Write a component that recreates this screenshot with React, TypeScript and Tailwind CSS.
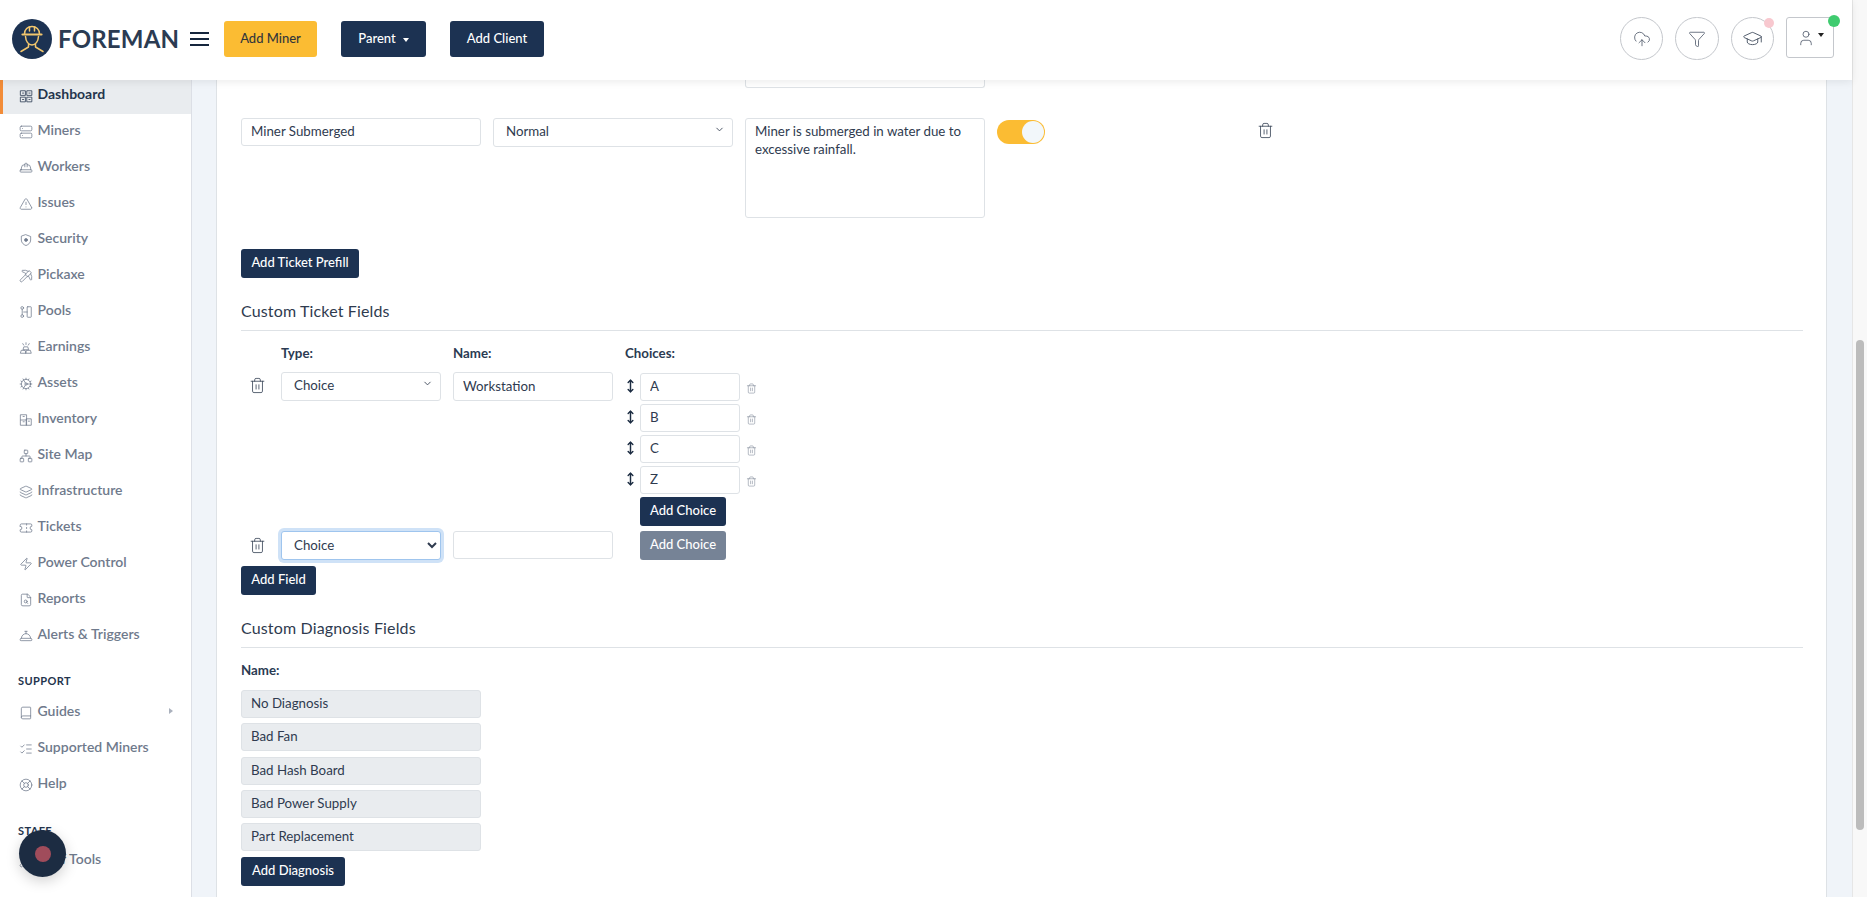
import React from "react";
import {
  CloudUpload, Funnel, GraduationCap, User, Trash2, Server, HardHat, TriangleAlert,
  Pickaxe, Cog, Network, Layers, Ticket, Zap, FileSearch, ConciergeBell,
  Book, ListChecks, LifeBuoy, Wrench, ChevronDown, MoveVertical,
} from "lucide-react";

const FONT = "font-['Lato','Liberation_Sans',sans-serif]";

type IconProps = { size?: number; strokeWidth?: number; className?: string };

const mk = (body: React.ReactNode) => ({ size = 14, strokeWidth = 1.3, className = "" }: IconProps) => (
  <svg width={size} height={size} viewBox="0 0 24 24" fill="none" stroke="currentColor" strokeWidth={strokeWidth} strokeLinecap="round" strokeLinejoin="round" className={className}>
    {body}
  </svg>
);

const DashIcon = mk(<>
  <rect x="3" y="3" width="8" height="8" /><rect x="14" y="3" width="8" height="8" />
  <rect x="3" y="14" width="8" height="8" /><rect x="14" y="14" width="8" height="8" />
  <path d="M6 7h2M17 7h2M6 18h2M17 18h2" />
</>);
const ShieldDot = mk(<>
  <path d="M12 3l8 3v6c0 5-4 8-8 9.500-4-1.500-8-4.500-8-9.500V6z" /><circle cx="12" cy="12" r="2.500" fill="currentColor" />
</>);
const PoolIcon = mk(<>
  <rect x="14" y="3" width="7" height="18" rx="1" /><path d="M14 12H8M5.500 7.500v9" />
  <circle cx="5.500" cy="5" r="2.300" /><circle cx="5.500" cy="19" r="2.300" />
</>);
const GoldIcon = mk(<>
  <path d="M9 10h6l1.500 5h-9zM4.500 16h6L12 21H3zM13.500 16h6L21 21h-9z" /><path d="M12 3v3M6.500 4.500L8 7M17.500 4.500L16 7" />
</>);
const InventoryIcon = mk(<>
  <rect x="3" y="3" width="10" height="18" /><rect x="13" y="10" width="8" height="11" />
  <path d="M3 12h10M7 6h2M7 15h2M16 14h2" />
</>);

const nav: [string, React.ComponentType<IconProps>][] = [
  ["Dashboard", DashIcon], ["Miners", Server], ["Workers", HardHat], ["Issues", TriangleAlert],
  ["Security", ShieldDot], ["Pickaxe", Pickaxe], ["Pools", PoolIcon], ["Earnings", GoldIcon],
  ["Assets", Cog], ["Inventory", InventoryIcon], ["Site Map", Network], ["Infrastructure", Layers],
  ["Tickets", Ticket], ["Power Control", Zap], ["Reports", FileSearch], ["Alerts & Triggers", ConciergeBell],
];
const support: [string, React.ComponentType<IconProps>][] = [
  ["Guides", Book], ["Supported Miners", ListChecks], ["Help", LifeBuoy],
];

function NavRow({ label, Icon, active, caret }: { label: string; Icon: React.ComponentType<IconProps>; active?: boolean; caret?: boolean }) {
  return (
    <div className={`flex h-9 shrink-0 items-center pb-[5px] pr-[18px] text-[14px] ${active ? "border-l-[3px] border-[#f28c38] bg-[#e9ecef] pl-[16px] font-bold text-[#24344d]" : "pl-[19px] font-semibold text-[#6f7a8c]"}`}>
      <Icon size={14} strokeWidth={1.3} className="mr-[4.5px] mt-[4px] shrink-0" />
      <span>{label}</span>
      {caret && <span className="ml-auto h-0 w-0 border-y-[3px] border-l-[4px] border-y-transparent border-l-[#aab1bd]" />}
    </div>
  );
}

function Btn({ children, className = "" }: { children: React.ReactNode; className?: string }) {
  return (
    <button className={`h-[29px] shrink-0 rounded-[3px] bg-[#1c3252] pb-[1px] text-[13px] font-medium text-white ${className}`}>{children}</button>
  );
}

function Field({ value = "", className = "", disabled }: { value?: string; className?: string; disabled?: boolean }) {
  return (
    <input
      defaultValue={value}
      disabled={disabled}
      className={`rounded-[3px] border border-[#dee2e6] pb-[2px] pl-[9px] pr-[9px] text-[13.3px] text-[#2f3b4f] outline-none ${disabled ? "bg-[#e9ecef]" : "bg-white"} ${className}`}
    />
  );
}

function Sel({ value, width }: { value: string; width: string }) {
  return (
    <div className={`relative h-[29px] shrink-0 rounded-[3px] border border-[#dee2e6] bg-white pl-3 text-[13.3px] leading-[25px] text-[#2f3b4f] ${width}`}>
      {value}
      <ChevronDown size={11} strokeWidth={2} className="absolute right-[7px] top-[5px] text-[#3f4a5c]" />
    </div>
  );
}

const Logo = () => (
  <svg width="40" height="40" viewBox="0 0 40 40" className="shrink-0">
    <circle cx="20" cy="20" r="20" fill="#1c3252" />
    <g fill="none" stroke="#f2c66d" strokeWidth="1.500" strokeLinecap="round" strokeLinejoin="round">
      <path d="M10.500 15.500h19" strokeWidth="2.200" />
      <path d="M12.500 15c0-4.500 3.200-7.500 7.500-7.500s7.500 3 7.500 7.500" />
      <path d="M17.500 8v4M22.500 8v4" />
      <path d="M13.500 17.500c.3 5 3 8.500 6.500 8.500s6.200-3.500 6.500-8.500" />
      <path d="M16.500 25.500v2.500L9 32.500M23.500 25.500v2.500l7.500 4.500" />
    </g>
  </svg>
);

function RoundIcon({ children, w }: { children: React.ReactNode; w: string }) {
  return <div className={`flex h-[43px] ${w} items-center justify-center rounded-full border border-[#c4c7cc] text-[#3f4a5c]`}>{children}</div>;
}

const Hamburger = () => (
  <div className="ml-[12px] flex h-[14px] w-[19px] shrink-0 flex-col justify-between">
    <span className="h-[2px] bg-[#16263d]" /><span className="h-[2px] bg-[#16263d]" /><span className="h-[2px] bg-[#16263d]" />
  </div>
);

export default function App() {
  return (
    <div className={`flex h-[897px] w-full overflow-hidden bg-[#f0f4f9] ${FONT}`}>
      <div className="flex min-w-0 flex-1 flex-col">
        <header className="relative z-10 flex h-20 shrink-0 items-center bg-white pb-[2px] pl-3 pr-[18px] shadow-[0_2px_8px_rgba(0,0,0,0.08)]">
          <Logo />
          <span className="ml-[6px] w-[120px] text-[24px] font-bold leading-none tracking-[0.2px] text-[#2b3b52]">FOREMAN</span>
          <Hamburger />
          <button className="ml-[15px] h-9 w-[93px] rounded-[3px] bg-[#fbbc33] pb-[1px] text-[13px] font-medium text-[#33363b]">Add Miner</button>
          <button className="ml-6 flex h-9 w-[85px] items-center justify-center rounded-[3px] bg-[#1c3252] pb-[1px] text-[13px] font-medium text-white">
            Parent<span className="ml-[7px] mt-[2px] h-0 w-0 border-x-[3px] border-t-[4px] border-x-transparent border-t-white" />
          </button>
          <button className="ml-6 h-9 w-[94px] rounded-[3px] bg-[#1c3252] pb-[1px] text-[13px] font-medium text-white">Add Client</button>
          <div className="-mt-[1px] ml-auto flex items-start gap-3">
            <RoundIcon w="w-[43px]"><CloudUpload size={18} strokeWidth={1} /></RoundIcon>
            <RoundIcon w="w-[44px]"><Funnel size={18} strokeWidth={1} /></RoundIcon>
            <div className="relative">
              <RoundIcon w="w-[43px]"><GraduationCap size={21} strokeWidth={1} /></RoundIcon>
              <span className="absolute right-0 top-[1px] h-[10px] w-[10px] rounded-full bg-[#f8c8cf]" />
            </div>
            <div className="relative flex h-[41px] w-[48px] items-center justify-center rounded-[3px] border border-[#c4c7cc] text-[#3f4a5c]">
              <User size={18} strokeWidth={1} />
              <span className="mb-[6px] ml-[3px] h-0 w-0 border-x-[3px] border-t-[4px] border-x-transparent border-t-[#222]" />
              <span className="absolute -right-[7px] -top-[3px] h-3 w-3 rounded-full bg-[#3fcb6f]" />
            </div>
          </div>
        </header>

        <div className="flex min-h-0 flex-1">
          <aside className="relative flex w-[192px] shrink-0 flex-col overflow-hidden border-r border-[#dcdfe6] bg-white">
            <div className="-mt-[2px] flex flex-col">
              {nav.map(([l, I], i) => <NavRow key={l} label={l} Icon={I} active={i === 0} />)}
            </div>
            <div className="mt-[20px] pl-[18px] text-[11px] font-bold leading-[14px] tracking-[0.4px] text-[#24344d]">SUPPORT</div>
            <div className="mt-[7px] flex flex-col">
              {support.map(([l, I], i) => <NavRow key={l} label={l} Icon={I} caret={i === 0} />)}
            </div>
            <div className="mt-[21px] pl-[18px] text-[11px] font-bold leading-[14px] tracking-[0.4px] text-[#24344d]">STAFF</div>
            <div className="mt-[5px]"><NavRow label="Staff Tools" Icon={Wrench} /></div>
            <div className="absolute left-[19px] top-[750px] flex h-[47px] w-[47px] items-center justify-center rounded-full bg-[#1c2c42] shadow-[0_4px_14px_rgba(0,0,0,0.18)]">
              <span className="h-4 w-4 rounded-full bg-[#a04c5b]" />
            </div>
          </aside>

          <main className="ml-[24px] mr-[25px] min-w-0 flex-1 border-x border-[#dee2e6] bg-white pl-6 pr-[23px] text-[#2f3b4f]">
            <div className="ml-[504px] h-2 w-[240px] rounded-b-[3px] border-x border-b border-[#dee2e6]" />

            <div className="mt-[30px] flex items-start gap-3">
              <Field value="Miner Submerged" className="h-[28px] w-[240px]" />
              <Sel value="Normal" width="w-[240px]" />
              <textarea
                defaultValue="Miner is submerged in water due to excessive rainfall."
                className="h-[100px] w-[240px] resize-none rounded-[3px] border border-[#dee2e6] px-[9px] py-[3px] text-[13.3px] leading-[18px] text-[#2f3b4f] outline-none"
              />
              <div className="mt-[2px] flex h-6 w-12 items-center justify-end rounded-full bg-[#fbbc33] pr-[1px]">
                <span className="h-[22px] w-[22px] rounded-full bg-[#f2f7fa]" />
              </div>
              <Trash2 size={17} strokeWidth={1.2} className="ml-[200px] mt-[4px] text-[#3f4a5c]" />
            </div>

            <Btn className="mt-[31px] block w-[118px]">Add Ticket Prefill</Btn>

            <h3 className="mt-[21px] border-b border-[#dee2e6] pb-[7px] text-[16px] font-normal leading-6 tracking-[0.15px] text-[#2f3b4f]">Custom Ticket Fields</h3>

            <div className="mt-[13px] flex h-[18px] items-center text-[13.3px] font-bold leading-[18px] text-[#2b3b52]">
              <span className="ml-[40px] w-[172px]">Type:</span>
              <span className="w-[172px]">Name:</span>
              <span>Choices:</span>
            </div>

            <div className="mt-[10px] flex items-start">
              <div className="flex w-[40px] justify-start pl-[8px] pt-[5px]"><Trash2 size={17} strokeWidth={1.2} className="text-[#3f4a5c]" /></div>
              <Sel value="Choice" width="w-[160px]" />
              <Field value="Workstation" className="ml-3 h-[29px] w-[160px]" />
              <div className="ml-3 mt-[1px] flex flex-col">
                {["A", "B", "C", "Z"].map((c) => (
                  <div key={c} className="mb-[3px] flex items-center">
                    <MoveVertical size={14} strokeWidth={2.5} className="-ml-[2px] -mt-[3px] mr-[2px] w-[15px] shrink-0 text-[#1c2c42]" />
                    <Field value={c} className="h-[28px] w-[100px]" />
                    <Trash2 size={11} strokeWidth={1.2} className="ml-[6px] mt-[2px] text-[#7b8494]" />
                  </div>
                ))}
                <Btn className="ml-[15px] w-[86px]">Add Choice</Btn>
              </div>
            </div>

            <div className="mt-[5px] flex items-start">
              <div className="flex w-[40px] justify-start pl-[8px] pt-[6px]"><Trash2 size={17} strokeWidth={1.2} className="text-[#3f4a5c]" /></div>
              <select className="h-[29px] w-[160px] shrink-0 rounded-[3px] border border-[#9fc5ee] bg-white pb-[2px] pl-[8px] text-[13.3px] text-[#2f3b4f] shadow-[0_0_0_3px_#cfe2f7] outline-none">
                <option>Choice</option>
              </select>
              <Field className="ml-3 h-[28px] w-[160px]" />
              <Btn className="ml-[27px] w-[86px] opacity-60">Add Choice</Btn>
            </div>

            <Btn className="mt-[6px] block w-[75px]">Add Field</Btn>

            <h3 className="mt-[21px] border-b border-[#dee2e6] pb-[7px] text-[16px] font-normal leading-6 tracking-[0.15px] text-[#2f3b4f]">Custom Diagnosis Fields</h3>

            <div className="mt-[13px] h-[18px] text-[13.3px] font-bold leading-[18px] text-[#2b3b52]">Name:</div>

            <div className="mt-[11px] flex flex-col gap-[5.3px]">
              {["No Diagnosis", "Bad Fan", "Bad Hash Board", "Bad Power Supply", "Part Replacement"].map((d) => (
                <Field key={d} value={d} disabled className="h-[28px] w-[240px]" />
              ))}
            </div>

            <Btn className="mt-[6px] block w-[104px]">Add Diagnosis</Btn>
          </main>
        </div>
      </div>

      <div className="w-[15px] shrink-0 border-l border-[#e6e6e6] bg-[#f8f8f8] pl-[3px] pt-[340px]">
        <div className="h-[490px] w-2 rounded-full bg-[#bcbcbc]" />
      </div>
    </div>
  );
}
